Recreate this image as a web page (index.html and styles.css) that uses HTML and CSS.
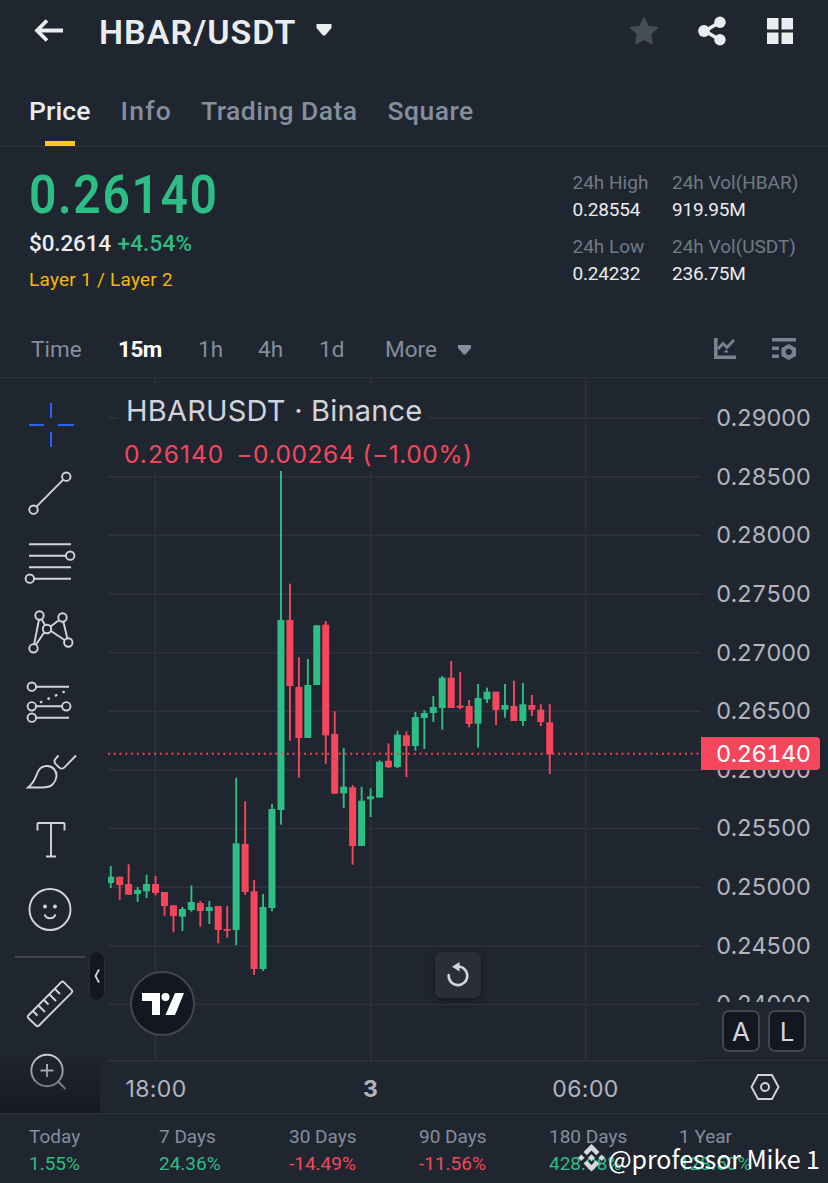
FILE: index.html
```
<!DOCTYPE html>
<html lang="en">
<head>
    <meta charset="UTF-8">
    <title>HBAR/USDT</title>
    <link rel="stylesheet" href="styles.css">
</head>
<body>
    <header class="topbar">
        <svg class="back" width="30" height="24" viewBox="0 0 30 24"><path d="M29 11.500H3M13 1.500L3 11.500l10 10" fill="none" stroke="#eaecef" stroke-width="3.800"/></svg>
        <h1>HBAR/USDT</h1>
        <svg class="caret" width="16" height="12" viewBox="0 0 16 12"><path d="M.5 0h15v4L9 11.500H7L.5 4z" fill="#eaecef"/></svg>
        <div class="top-actions">
            <svg width="30" height="30" viewBox="0 0 30 30"><path d="M15 2l4 8.500 9.200 1.200-6.700 6.500 1.600 9.300L15 23.200l-8.100 4.300 1.600-9.300-6.700-6.500L11 10.500z" fill="#474d57" stroke="#474d57" stroke-width="1.500" stroke-linejoin="round"/></svg>
            <svg width="30" height="30" viewBox="0 0 30 30"><path d="M23 6L8 15l15 9" fill="none" stroke="#eaecef" stroke-width="3.500"/><circle cx="23" cy="6.200" r="5.700" fill="#eaecef"/><circle cx="7" cy="15" r="5.900" fill="#eaecef"/><circle cx="23" cy="23.800" r="5.700" fill="#eaecef"/></svg>
            <svg width="26" height="26" viewBox="0 0 26 26"><path d="M0 0h11.500v11.500H0zM14.500 0H26v11.500H14.500zM0 14.500h11.500V26H0zM14.500 14.500H26V26H14.500z" fill="#eaecef"/></svg>
        </div>
    </header>

    <nav class="tabs">
        <a class="tab active">Price</a>
        <a class="tab info">Info</a>
        <a class="tab trading">Trading Data</a>
        <a class="tab">Square</a>
    </nav>

    <section class="summary">
        <div class="quote">
            <div class="price">0.26140</div>
            <div class="sub"><span>$0.2614</span> <span class="up">+4.54%</span></div>
            <div class="layer">Layer 1 / Layer 2</div>
        </div>
        <div class="stats">
            <div class="stat"><label>24h High</label><b>0.28554</b></div>
            <div class="stat"><label>24h Vol(HBAR)</label><b>919.95M</b></div>
            <div class="stat"><label>24h Low</label><b>0.24232</b></div>
            <div class="stat"><label>24h Vol(USDT)</label><b>236.75M</b></div>
        </div>
    </section>

    <nav class="intervals">
        <span class="i-time">Time</span>
        <span class="i-15m active">15m</span>
        <span class="i-1h">1h</span>
        <span class="i-4h">4h</span>
        <span class="i-1d">1d</span>
        <span class="i-more">More</span>
        <svg class="caret" width="13" height="10" viewBox="0 0 13 10"><path d="M0 0h13v3L7.500 9.500h-2L0 3z" fill="#848e9c"/></svg>
        <div class="tools">
            <svg width="22" height="22" viewBox="0 0 22 22"><path d="M1.800 0v19.300H22" fill="none" stroke="#7a8290" stroke-width="3.600"/><path d="M4 11l5-5.500 4 4L20 2" fill="none" stroke="#7a8290" stroke-width="2.800"/><path d="M9.500 14.500l2.700-3 2.700 3z" fill="#7a8290"/></svg>
            <svg width="24" height="24" viewBox="0 0 24 24"><path d="M0 1h24v3.500H0zM0 9.500h7V13H0zM0 17.500h7V21H0z" fill="#7a8290"/><path fill-rule="evenodd" d="M16.700 7l7.300 4v8l-7.300 4-7.300-4v-8zM16.700 11.700a3.200 3.200 0 1 0 .01 0z" fill="#7a8290"/></svg>
        </div>
    </nav>

    <main class="chart">
        <aside class="toolbar">
            <svg class="tool" viewBox="0 390 100 69"><path d="M51 403v15M51 432v15M29 425h15M58 425h16" stroke="#2962ff" stroke-width="2"/></svg>
            <svg class="tool" viewBox="0 459 100 69"><circle cx="66.300" cy="476.700" r="4.200"/><circle cx="33.500" cy="509.700" r="4.200"/><path d="M36.500 506.700l26.800-27"/></svg>
            <svg class="tool" viewBox="0 528 100 69"><path d="M29 544.300h42M29 555.700h37M29 567.300h42M34 578.700h37"/><circle cx="70.200" cy="555.700" r="4.200"/><circle cx="29.800" cy="578.700" r="4.200"/></svg>
            <svg class="tool" viewBox="0 597 100 69"><path d="M39 619.500L34.200 644M41.500 619l3.500 6M36 644.500l8.500-12.500M50.500 626.500l8-6M63.300 621.500l4.200 17.500M51 631l13.500 9"/><circle cx="39.500" cy="615.500" r="4.200"/><circle cx="62.500" cy="617.500" r="4.200"/><circle cx="47" cy="629" r="4.200"/><circle cx="33.500" cy="648.300" r="4.200"/><circle cx="68.300" cy="642.500" r="4.200"/></svg>
            <svg class="tool" viewBox="0 666 100 69"><circle cx="31.800" cy="686.700" r="4.200"/><circle cx="31.800" cy="706.300" r="4.200"/><circle cx="66.300" cy="706.300" r="4.200"/><circle cx="31.800" cy="717.700" r="4.200"/><path d="M36 686.700h33M36 706.300h26M36 717.700h33"/><path d="M40 702.500l27-12" stroke-width="2.300" stroke-dasharray="2.500 5.700"/></svg>
            <svg class="tool" viewBox="0 735 100 69"><path d="M28 787.500C36 781 35.500 775 39 770c3.500-5 11-5.300 15-1 4 4.500 3 11-1.500 15.500-3.500 3.500-8 3-12.500 3zM58.500 755.500l-3 3.300c-1.500 1.700-1.300 3.500 0 5l3.500 3.500c1.500 1.500 4 1.500 5.500 0L76 755.500"/></svg>
            <svg class="tool" viewBox="0 804 100 69"><path d="M37.500 830.500v-6.800c0-.5.300-.7.700-.7h25.600c.4 0 .7.200.7.700v6.800M51 823v33.500M46 856.500h10"/></svg>
            <svg class="tool" viewBox="0 873 100 69"><circle cx="50" cy="909.500" r="20.500"/><path d="M44.500 914.300c2 5.200 9 5.200 11 0"/><circle class="dot" cx="45" cy="906.500" r="2"/><circle class="dot" cx="55" cy="906.500" r="2"/></svg>
            <hr>
            <svg class="tool" viewBox="0 969 100 69"><path d="M28.300 1015.500L61 982.300c1-1 2-1 3 0l7.500 7.500c1 1 1 2 0 3L39 1025.500c-1 1-2 1-3 0l-7.700-7.500c-.8-.8-.8-1.700 0-2.500zM33 1011l4.500 4.500M38.500 1005.500l6.500 6.500M44 1000l4.500 4.500M49.500 994.500l6.500 6.500M55 989l5 5"/></svg>
            <svg class="tool" viewBox="0 1038 100 69"><circle cx="47" cy="1070.500" r="15.700"/><path d="M40.500 1070.500h13M47 1064v13M58.500 1082l7 7"/></svg>
            <div class="fade"></div>
            <div class="handle"><svg width="6" height="14" viewBox="0 0 6 14"><path d="M5 .5L1.500 7 5 13.500" fill="none" stroke="#d1d4dc" stroke-width="1.800"/></svg></div>
        </aside>

        <div class="plot">
            <svg id="candles" width="601" height="735" viewBox="100 378 601 735"></svg>
            <div class="legend">
                <div class="symbol">HBARUSDT · Binance</div>
                <div class="change"><span class="last">0.26140</span><span>−0.00264 (−1.00%)</span></div>
            </div>
            <div class="tv-logo"><svg width="42" height="22" viewBox="0 0 42 22"><path d="M0 0h18v22h-8V8H0zM33 0h9l-9 22h-9.500z" fill="#fff"/><circle cx="23.500" cy="4" r="4" fill="#fff"/></svg></div>
            <div class="reset"><svg width="24" height="26" viewBox="0 0 24 26"><path d="M2.700 13a9.300 9.300 0 1 0 9.300-8.500" fill="none" stroke="#d1d4dc" stroke-width="2.600" stroke-linecap="round"/><path d="M6 4.700L13.500 0v9.400z" fill="#d1d4dc"/></svg></div>
        </div>

        <div class="axis">
            <div class="scale">
                <span>0.29000</span><span>0.28500</span><span>0.28000</span><span>0.27500</span>
                <span>0.27000</span><span>0.26500</span><span>0.26000</span><span>0.25500</span>
                <span>0.25000</span><span>0.24500</span><span>0.24000</span>
            </div>
            <div class="last-price">0.26140</div>
            <div class="modes"><span>A</span><span>L</span></div>
            <div class="gear"><svg width="30" height="26" viewBox="0 0 30 26"><path d="M8 1h14l6.500 12L22 25H8L1.500 13z"/><circle cx="15" cy="13" r="4"/></svg></div>
        </div>
    </main>

    <footer class="periods">
        <div><label>Today</label><b class="up">1.55%</b></div>
        <div><label>7 Days</label><b class="up">24.36%</b></div>
        <div><label>30 Days</label><b class="down">-14.49%</b></div>
        <div><label>90 Days</label><b class="down">-11.56%</b></div>
        <div><label>180 Days</label><b class="up">428.08%</b></div>
        <div><label>1 Year</label><b class="up">128.50%</b></div>
        <div class="watermark">
            <svg width="27" height="28" viewBox="0 0 27 28"><path d="M13.500 0l8 8-3.300 3.300-4.700-4.700-4.700 4.700L5.500 8zM13.500 10.200l3.500 3.600-3.500 3.500-3.500-3.500zM3.300 10.500l3.300 3.300-3.300 3.300L0 13.800zM23.700 10.500l3.300 3.300-3.300 3.300-3.300-3.300zM13.500 27.500l8-8-3.300-3.300-4.700 4.700-4.700-4.700-3.300 3.300z" fill="#d5d8de"/></svg>
            <span>@professor Mike 1</span>
        </div>
    </footer>

    <script>
        const NS = 'http://www.w3.org/2000/svg';
        const svg = document.getElementById('candles');
        const UP = '#2ebd85', DOWN = '#f6465d';

        function add(tag, attrs) {
            const el = document.createElementNS(NS, tag);
            for (const k in attrs) el.setAttribute(k, attrs[k]);
            svg.appendChild(el);
            return el;
        }

        // grid
        for (let i = 0; i < 11; i++) {
            add('rect', { x: 108, y: 417.3 + i * 58.65, width: 593, height: 1.5, class: 'grid' });
        }
        [155.5, 371, 585.7].forEach(x => add('rect', { x: x - .8, y: 378, width: 1.5, height: 682, class: 'grid' }));
        add('rect', { x: 108, y: 1060, width: 593, height: 1.5, class: 'grid' });

        // up?, high, body top, body bottom, low
        const data = [
            [1,866,876.7,883,888],[0,876.7,876.7,885,900],[0,864.3,884,894.7,894.7],[1,887,890,894,902],
            [1,874.7,884,891.3,898],[0,876,884,893,895.3],[0,892,892,906,915.7],[0,905.3,905.3,916,932.3],
            [1,907,909,916.7,931],[1,885.3,902,910,911.7],[0,901,903,911,926.7],[1,901,907,911,924],
            [0,906,906,930,943.3],[0,906,929,930.7,937.7],[1,777.7,843.3,930,945.3],[0,801.3,844,892,894.7],
            [0,880,891.3,969,975],[1,894,907,969,970.7],[1,804,809,908,911.3],[1,470,620,810,824.7],
            [0,583.7,620,686,740.7],[0,657.3,687,738,777.7],[1,659,685,738,738],[1,625,625.3,685,685],
            [0,621,624.7,735.3,763.7],[0,711.3,734,793.7,793.7],[1,748,786.7,793.3,808],[0,785,787.3,846,864.7],
            [1,786.7,800.7,846,846],[1,788.3,796.3,799.3,817],[1,760.3,761.7,797.5,797.5],[0,743.3,760.7,767.3,768],
            [1,730.7,734.7,767,768],[0,731.3,735.3,746,777],[1,712,717,746,750.7],[1,710,713,718,749],
            [1,696,707,713,722],[1,676,677.7,708,729.7],[0,661,677.7,708,708],[0,672,705.7,707.7,709.3],
            [0,700,706,724,727.3],[1,684,698,723.7,747.7],[1,687.7,691.7,699.3,703],[0,691.7,691.7,710,725],
            [1,684,705,709.7,717.7],[0,680.7,706,721,721],[1,683,704.3,721,726],[0,695,705,709.7,716],
            [0,704.3,709.7,722,726],[0,704,722.3,754,774]
        ];
        data.forEach((c, i) => {
            const x = 110.7 + i * 8.96;
            const fill = c[0] ? UP : DOWN;
            add('rect', { x: x - .9, y: c[1], width: 1.9, height: c[4] - c[1], fill });
            const left = Math.max(x - 3.5, 108);
            add('rect', { x: left, y: c[2], width: x + 3.5 - left, height: c[3] - c[2], fill });
        });

        // last price line
        add('path', { d: 'M108 753.700H701', stroke: DOWN, 'stroke-width': 1.9, 'stroke-dasharray': '1.9 3.870' });

        [['18:00', 156], ['3', 370.500], ['06:00', 585.500]].forEach(([t, x]) => {
            const el = add('text', { x, y: 1096.5, class: t === '3' ? 'time day' : 'time' });
            el.textContent = t;
        });
    </script>
</body>
</html>
```
FILE: styles.css
```
* { box-sizing: border-box; }
body { margin: 0; width: 828px; height: 1183px; overflow: hidden; background: #202630; color: #eaecef; font-family: Roboto, "Liberation Sans", sans-serif; }
svg { display: block; flex: none; }
.up { color: #2ebd85; }
.down { color: #f6465d; }

.topbar { display: flex; align-items: center; height: 62px; padding: 0 35px 0 34px; }
.topbar h1 { margin: 1px 22px 0 35px; width: 195px; font-size: 34px; font-weight: 600; letter-spacing: 1.050px; line-height: 40px; white-space: nowrap; }
.topbar .caret { margin-top: -2px; }
.top-actions { display: flex; align-items: center; gap: 39px; margin-left: auto; }
.top-actions svg:nth-child(2) { margin: 0 1px 0 -1px; }

.tabs { display: flex; gap: 30px; height: 85px; padding: 33px 29px 0; border-bottom: 1.500px solid #2b3139; }
.tab { position: relative; height: 51px; font-size: 26.500px; line-height: 32px; font-weight: 500; color: #848e9c; letter-spacing: .450px; white-space: nowrap; }
.tab.active { color: #eaecef; letter-spacing: .1px; }
.tab.info { letter-spacing: 1.200px; margin-right: -1px; }
.tab.active::after { content: ""; position: absolute; left: 16px; bottom: 0; width: 30px; height: 5px; background: #fcc62d; }

.summary { display: flex; justify-content: space-between; height: 175px; padding: 20px 29px 0; }
.price { font-size: 54px; line-height: 56px; font-weight: 600; color: #2ebd85; letter-spacing: 1.800px; transform: scaleX(.89); transform-origin: left; }
.sub { margin-top: 5px; font-size: 22.500px; line-height: 30px; font-weight: 500; }
.sub .up { margin-left: 1px; letter-spacing: .150px; }
.sub span:first-child { letter-spacing: -.150px; }
.layer { margin-top: 9px; font-size: 19px; line-height: 26px; color: #f0b90b; letter-spacing: .250px; }
.stats { display: grid; grid-template-columns: 99.500px 127px; grid-auto-rows: 63.500px; padding-top: 2px; }
.stat label, .stat b { display: block; font-size: 19px; line-height: 27px; font-weight: 400; white-space: nowrap; }
.stat label { color: #707a85; }
.stat b { letter-spacing: -.2px; }

.intervals { display: flex; align-items: center; height: 56px; padding: 0 32px 0 31px; font-size: 22.500px; color: #848e9c; border-bottom: 1.500px solid #2b3139; }
.intervals .active { color: #fff; font-weight: 700; letter-spacing: -.5px; }
.i-time { width: 87px; }
.i-15m { width: 80px; }
.i-1h { width: 60px; }
.i-4h { width: 61px; }
.i-1d { width: 66px; }
.i-more { width: 73px; }
.intervals span { margin-top: -1px; }
.tools { display: flex; align-items: center; gap: 36px; margin-left: auto; }
.tools svg { margin-top: -1px; }

.chart { display: grid; grid-template-columns: 100px 601px 127px; height: 735px; font-family: Inter, sans-serif; }
.toolbar { position: relative; padding-top: 12px; }
.tool { width: 100px; height: 69px; fill: none; stroke: #d1d4dc; stroke-width: 1.900; }
.tool .dot { fill: #d1d4dc; stroke: none; }
.toolbar hr { height: 2px; margin: 14px 15px 11px; border: 0; background: #434651; }
.fade { position: absolute; left: 0; bottom: 0; width: 100px; height: 60px; background: linear-gradient(rgba(19, 23, 34, 0), rgba(19, 23, 34, .85)); }
.handle { position: absolute; left: 89px; top: 573px; z-index: 1; display: flex; align-items: center; justify-content: center; width: 16px; height: 50px; border: 1px solid #2a2e39; border-radius: 8px; background: #131722; }

.plot { position: relative; }
.grid { fill: #2d323d; }
.time { font-size: 23px; letter-spacing: .4px; fill: #b2b5be; text-anchor: middle; }
.time.day { font-weight: 700; }
.legend { position: absolute; left: 17px; top: 7px; }
.legend div { width: max-content; background: #202630; white-space: nowrap; }
.symbol { height: 45px; padding: 0 6px 0 9px; font-size: 29px; line-height: 52px; color: #d1d4dc; letter-spacing: .2px; }
.change { display: flex; gap: 12px; height: 41px; padding: 0 6px 0 7px; font-size: 24.500px; line-height: 49px; color: #f6465d; letter-spacing: .560px; }
.change .last { letter-spacing: 1px; }
.tv-logo { position: absolute; left: 30px; top: 593px; display: flex; align-items: center; justify-content: center; width: 65px; height: 65px; border: 2px solid #434651; border-radius: 50%; background: #131722; }
.reset { position: absolute; left: 335px; top: 574px; display: flex; align-items: center; justify-content: center; width: 46px; height: 46px; border-radius: 6px; background: #2a2e39; box-shadow: 0 2px 6px rgba(0, 0, 0, .4); }

.axis { position: relative; }
.scale { display: flex; flex-direction: column; height: 624px; padding: 11px 0 0 15px; overflow: hidden; }
.scale span { flex: none; height: 58.650px; line-height: 58.650px; }
.scale, .last-price { font-size: 23.500px; font-variant-numeric: tabular-nums; letter-spacing: -.450px; color: #b2b5be; }
.last-price { position: absolute; left: 0; top: 359px; width: 119px; height: 33px; padding-left: 15px; line-height: 33px; color: #fff; background: #f6465d; border-radius: 0 4px 4px 0; }
.modes { display: flex; gap: 8px; height: 59px; padding: 8px 0 0 21px; border-bottom: 1.500px solid #2b3039; }
.modes span { width: 38px; height: 42px; border: 2px solid #434651; border-radius: 7px; background: #131722; color: #d1d4dc; font-size: 26px; line-height: 39px; text-align: center; }
.gear { display: flex; align-items: center; height: 52px; padding-left: 49px; }
.gear svg { fill: none; stroke: #d1d4dc; stroke-width: 1.900; }

.periods { position: relative; display: grid; grid-template-columns: repeat(6, 130px); height: 70px; padding: 9px 0 0 29px; border-top: 1.500px solid #2b3139; }
.periods label, .periods b { display: block; font-size: 19px; line-height: 27px; font-weight: 400; white-space: nowrap; }
.periods label { color: #848e9c; }
.watermark { position: absolute; left: 578px; top: 29px; display: flex; align-items: center; gap: 3px; font-family: "Noto Sans CJK SC", sans-serif; font-size: 25px; line-height: 30px; letter-spacing: -.080px; color: #fff; white-space: nowrap; }
```
